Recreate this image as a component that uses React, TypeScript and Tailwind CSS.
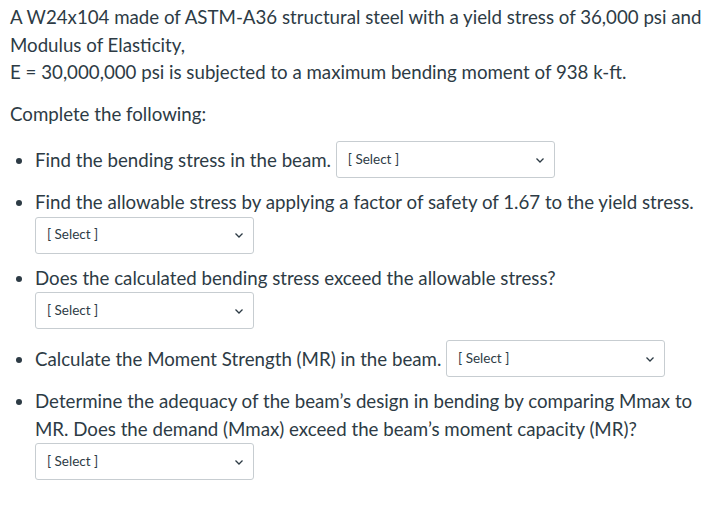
import React from 'react';

function SelectBox() {
  return (
    <span className="inline-flex items-center justify-between align-[3px] w-[219px] h-[37px] border border-[#c7cdd1] rounded-[3px] bg-white pl-[11px] pr-[9px] text-[13.5px] leading-none text-[#2d3b45]">
      <span>[ Select ]</span>
      <svg width="10" height="10" viewBox="0 0 10 10" fill="none" stroke="#2d3b45" strokeWidth="1.3">
        <path d="M1.5 3.5 L5 7 L8.5 3.5" />
      </svg>
    </span>
  );
}

export default function App() {
  return (
    <div className="bg-white min-h-[530px] px-[10px] pt-[4px] text-[18.7px] leading-[27.5px] text-[#2d3b45] font-['Lato',sans-serif]">
      <p>
        A W24x104 made of ASTM-A36 structural steel with a yield stress of 36,000 psi and Modulus of Elasticity,
        <br />E = 30,000,000 psi is subjected to a maximum bending moment of 938 k-ft.
      </p>
      <p className="mt-[14px]">Complete the following:</p>
      <ul className="list-disc pl-[25px] mt-[13px]">
        <li className="mb-[11px]">
          Find the bending stress in the beam. <SelectBox />
        </li>
        <li className="mb-[11px]">
          Find the allowable stress by applying a factor of safety of 1.67 to the yield stress. <SelectBox />
        </li>
        <li className="mb-[11px]">
          Does the calculated bending stress exceed the allowable stress? <SelectBox />
        </li>
        <li className="mb-[11px]">
          Calculate the Moment Strength (MR) in the beam. <SelectBox />
        </li>
        <li className="mb-[11px]">
          Determine the adequacy of the beam’s design in bending by comparing Mmax to MR. Does the demand (Mmax) exceed
          the beam’s moment capacity (MR)? <SelectBox />
        </li>
      </ul>
    </div>
  );
}
